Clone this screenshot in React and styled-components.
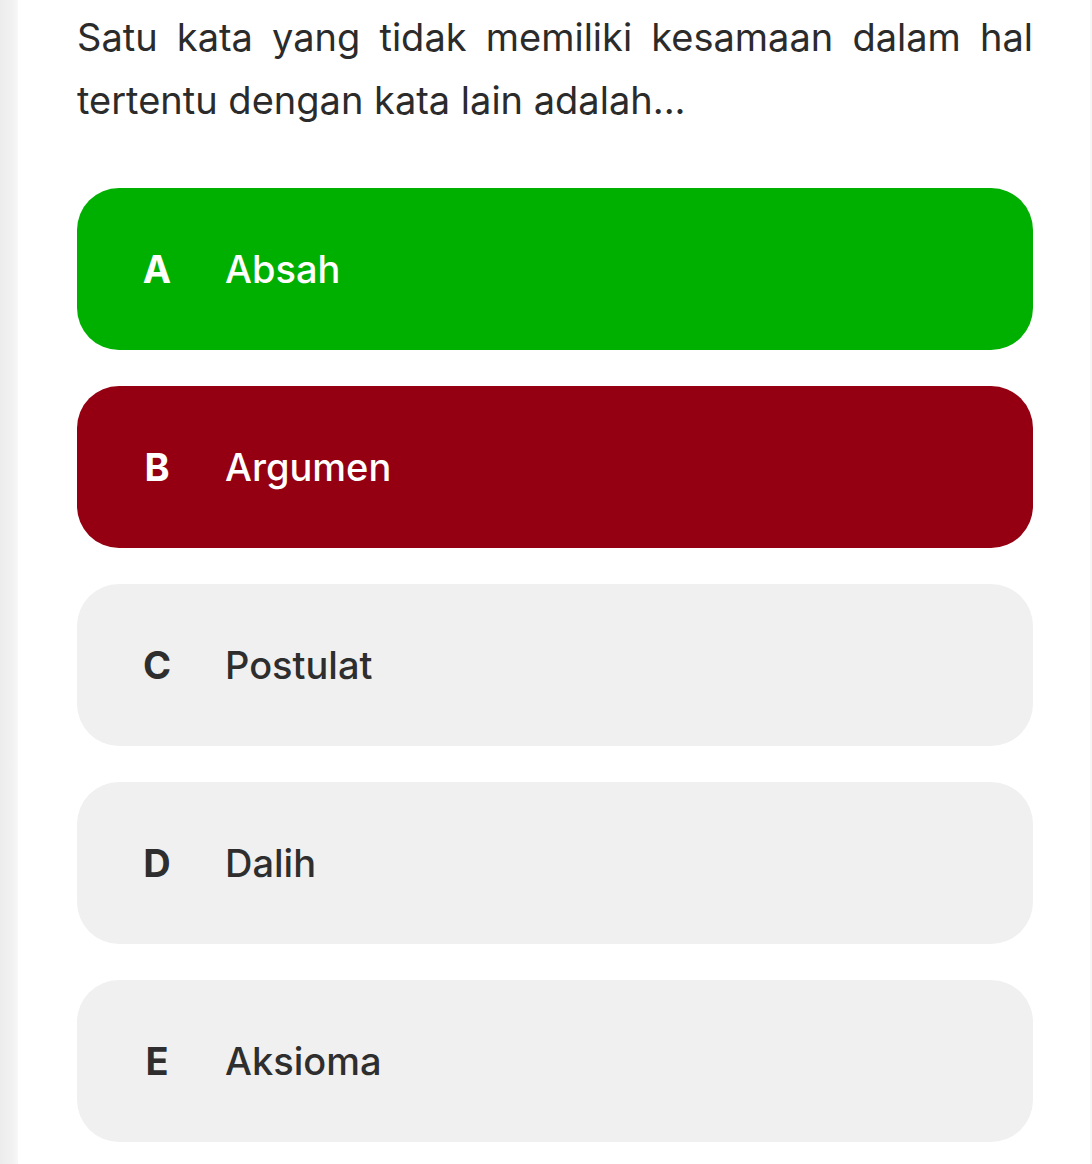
import React from "react";
import styled, { createGlobalStyle } from "styled-components";

const Global = createGlobalStyle`
  html, body { margin: 0; padding: 0; background: #ffffff; }
  body { font-family: Inter, "Noto Sans", sans-serif; }
`;

const Page = styled.div`
  display: flex;
  min-height: 1164px;
  background: #ffffff;
`;

const Gutter = styled.div`
  width: 18px;
  flex: none;
  background: linear-gradient(to right, #ececec 0%, #f2f2f2 70%, #f8f8f8 100%);
`;

const Panel = styled.main`
  flex: 1;
  padding: 6px 57px 22px 59px;
  border-right: 2px solid #f6f6f6;
`;

const Question = styled.p`
  margin: 0 0 56px;
  font-size: 38px;
  line-height: 63px;
  color: #2b2b2b;
  text-align: justify;
`;

const Options = styled.div`
  display: flex;
  flex-direction: column;
  gap: 36px;
`;

const palette = {
  correct: { bg: "#00b000", fg: "#ffffff" },
  wrong: { bg: "#940012", fg: "#ffffff" },
  idle: { bg: "#f0f0f0", fg: "#2e2e2e" },
};

const Option = styled.div`
  display: flex;
  align-items: center;
  height: 162px;
  box-sizing: border-box;
  padding-left: 58px;
  border-radius: 42px;
  background: ${(p) => palette[p.$state].bg};
  color: ${(p) => palette[p.$state].fg};
`;

const Letter = styled.span`
  width: 44px;
  text-align: center;
  font-size: 38px;
  font-weight: 700;
`;

const Label = styled.span`
  margin-left: 46px;
  font-size: 38px;
  font-weight: 500;
`;

const options = [
  { key: "A", text: "Absah", state: "correct" },
  { key: "B", text: "Argumen", state: "wrong" },
  { key: "C", text: "Postulat", state: "idle" },
  { key: "D", text: "Dalih", state: "idle" },
  { key: "E", text: "Aksioma", state: "idle" },
];

export default function App() {
  return (
    <>
      <Global />
      <Page>
        <Gutter />
        <Panel>
          <Question>
            Satu kata yang tidak memiliki kesamaan dalam hal tertentu dengan kata lain adalah...
          </Question>
          <Options>
            {options.map((o) => (
              <Option key={o.key} $state={o.state}>
                <Letter>{o.key}</Letter>
                <Label>{o.text}</Label>
              </Option>
            ))}
          </Options>
        </Panel>
      </Page>
    </>
  );
}
